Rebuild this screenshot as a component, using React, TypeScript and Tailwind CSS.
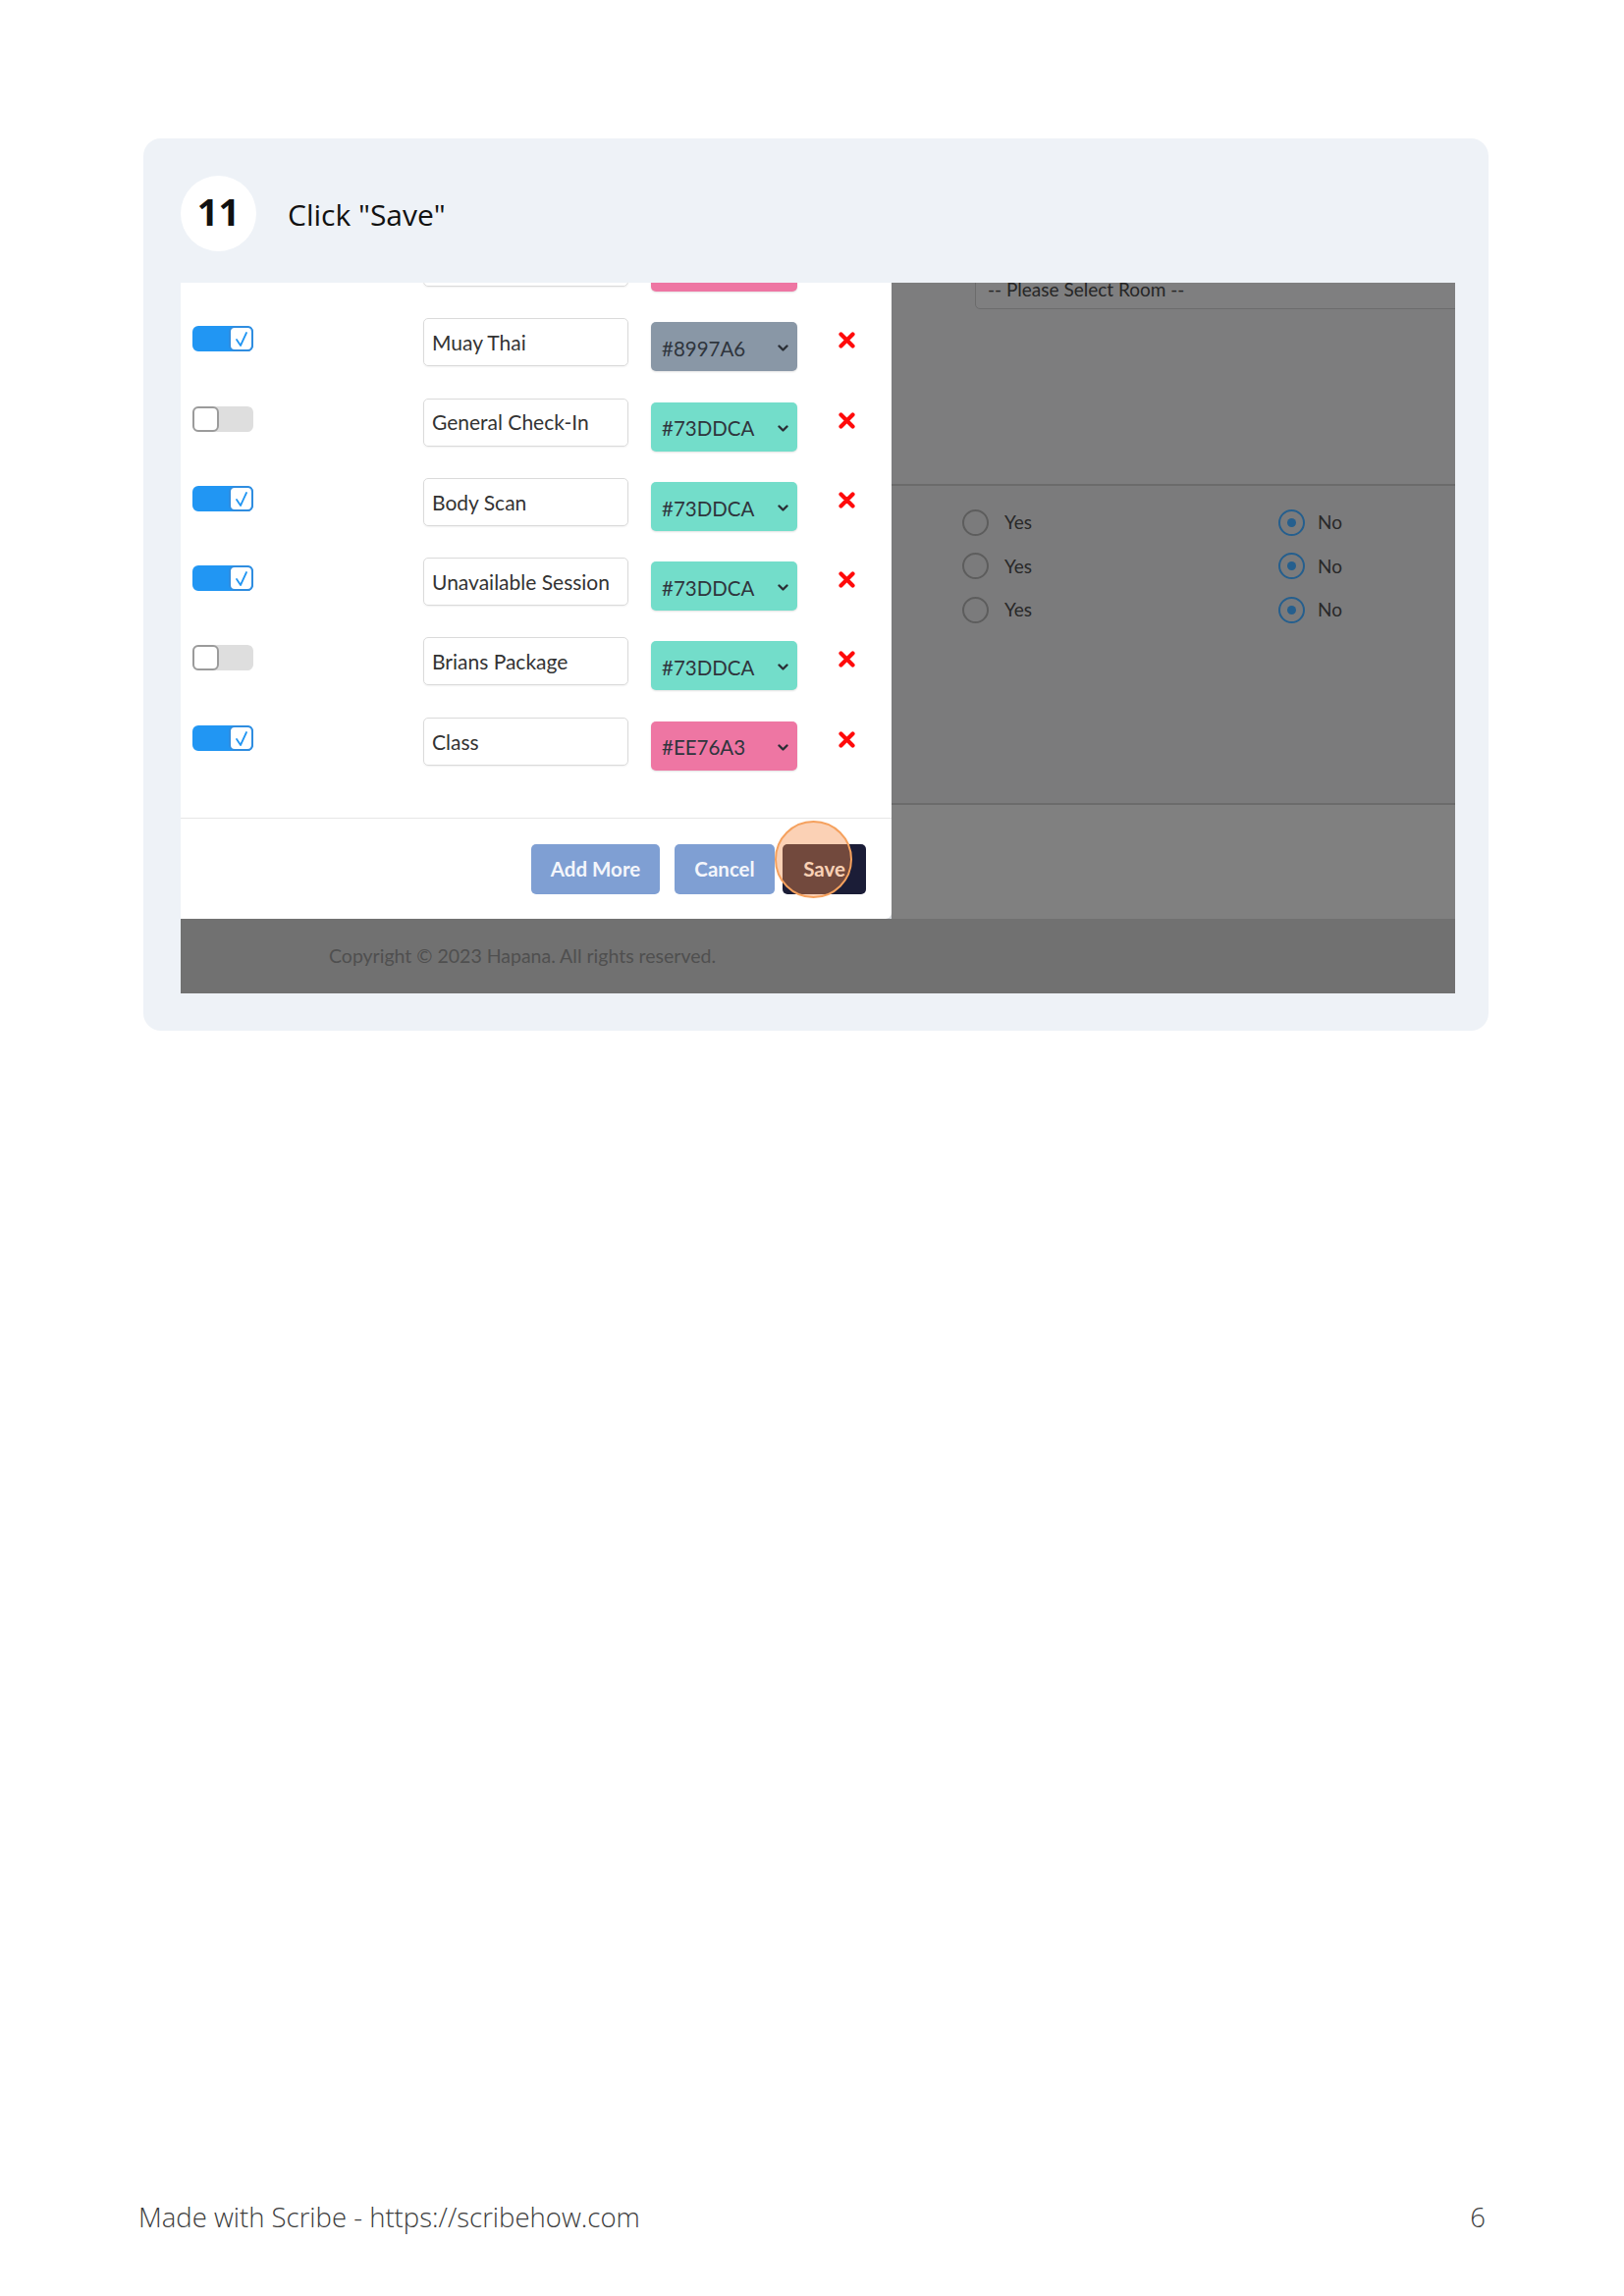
import React from "react"

type Row = { label: string; on: boolean; color: string; hidden?: boolean }

// first row is scrolled mostly out of view at the top of the modal
const rows: Row[] = [
  { label: "", on: true, color: "#EE76A3", hidden: true },
  { label: "Muay Thai", on: true, color: "#8997A6" },
  { label: "General Check-In", on: false, color: "#73DDCA" },
  { label: "Body Scan", on: true, color: "#73DDCA" },
  { label: "Unavailable Session", on: true, color: "#73DDCA" },
  { label: "Brians Package", on: false, color: "#73DDCA" },
  { label: "Class", on: true, color: "#EE76A3" },
]

function Toggle({ on }: { on: boolean }) {
  if (on) {
    return (
      <div className="flex h-[26px] w-[62px] justify-end rounded-[6px] bg-[#2196f3]">
        <div className="flex h-[26px] w-[25px] items-center justify-center rounded-[6px] border-2 border-[#2f8de0] bg-white">
          <svg width="16" height="18" viewBox="0 0 16 18" fill="none">
            <polyline points="3,10 7,16 13,3" stroke="#2196f3" strokeWidth="1.8" strokeLinecap="round" strokeLinejoin="round" />
          </svg>
        </div>
      </div>
    )
  }
  return (
    <div className="flex h-[26px] w-[62px] justify-start rounded-[6px] bg-[#dedede]">
      <div className="h-[26px] w-[27px] rounded-[6px] border-2 border-[#9b9b9b] bg-white" />
    </div>
  )
}

function Chevron() {
  return (
    <svg width="11" height="8" viewBox="0 0 11 8" fill="none">
      <polyline points="1.5,1.5 5.5,5.5 9.5,1.5" stroke="#2b2f36" strokeWidth="2.4" strokeLinecap="round" strokeLinejoin="round" />
    </svg>
  )
}

function RemoveIcon() {
  return (
    <svg width="17" height="17" viewBox="0 0 17 17">
      <path d="M2.5 2.5 L14.5 14.5 M14.5 2.5 L2.5 14.5" stroke="#ff0a0a" strokeWidth="4.2" strokeLinecap="round" />
    </svg>
  )
}

function Radio({ checked }: { checked: boolean }) {
  return checked ? (
    <div className="flex h-[27px] w-[27px] items-center justify-center rounded-full border-[2.5px] border-[#255f8e]">
      <div className="h-[9px] w-[9px] rounded-full bg-[#255f8e]" />
    </div>
  ) : (
    <div className="h-[27px] w-[27px] rounded-full border-[2.5px] border-[#5d5d5d]" />
  )
}

function Modal() {
  return (
    <div className="flex w-[724px] shrink-0 flex-col overflow-hidden rounded-br-[6px] bg-white font-['Lato',sans-serif] shadow-[0_2px_6px_rgba(0,0,0,0.25)]">
      <div className="-mt-[45px] flex flex-col">
        {rows.map((r, i) => (
          <div key={i} className="flex h-[81.3px] items-start pl-[12px]">
            <div className="mt-[8px]">
              <Toggle on={r.on} />
            </div>
            <div className="ml-[173px] flex h-[49px] w-[209px] items-center rounded-[5px] border border-[#dadada] pl-[8px] text-[21px] text-[#333333] shadow-[0_1px_2px_rgba(0,0,0,0.06)]">
              {r.label}
            </div>
            <div
              className="ml-[23px] mt-[4px] flex h-[50px] w-[149px] items-center justify-between rounded-[5px] pl-[11px] pr-[9px] pt-[4px] text-[20.5px] text-[#2f353d] shadow-[0_1px_2px_rgba(0,0,0,0.12)]"
              style={{ backgroundColor: r.color }}
            >
              <span>{r.hidden ? "" : r.color.toUpperCase()}</span>
              <Chevron />
            </div>
            <div className="ml-[42px] mt-[14px]">
              <RemoveIcon />
            </div>
          </div>
        ))}
      </div>
      <div className="mt-[21px] border-t border-[#e6e6e6]" />
      <div className="flex flex-1 items-start justify-end gap-[8px] pr-[26px] pt-[26px]">
        <div className="mr-[7px] flex h-[51px] w-[131px] items-center justify-center rounded-[5px] bg-[#7f9fd3] text-[20.5px] font-bold text-[#f4f6fb]">
          Add More
        </div>
        <div className="flex h-[51px] w-[102px] items-center justify-center rounded-[5px] bg-[#7f9fd3] text-[20.5px] font-bold text-[#f4f6fb]">
          Cancel
        </div>
        <div className="relative flex h-[51px] w-[85px] items-center justify-center rounded-[5px] bg-[#1b1d37] text-[20.5px] font-bold text-white">
          Save
          <div className="absolute -left-[8px] -top-[24px] h-[79px] w-[79px] rounded-full border-[2.5px] border-[#f5a15e] bg-[rgba(245,140,70,0.4)]" />
        </div>
      </div>
    </div>
  )
}

function BackgroundPanel() {
  return (
    <div className="flex flex-1 flex-col overflow-hidden font-['Lato',sans-serif]">
      <div className="h-[205px] bg-[#7d7d7e]">
        <div className="-mt-[13px] ml-[85px] flex h-[40px] w-[520px] items-center rounded-[5px] border border-[#6c6c6c] bg-[#7f7f80] pl-[12px] text-[19px] text-[#262626]">
          -- Please Select Room --
        </div>
      </div>
      <div className="h-[2px] bg-[#6b6b6b]" />
      <div className="flex h-[323px] flex-col bg-[#7b7b7c] pl-[72px] pt-[15px]">
        {[0, 1, 2].map((i) => (
          <div key={i} className="flex h-[44.5px] items-center text-[19px] text-[#282828]">
            <div className="flex w-[322px] items-center gap-[16px]">
              <Radio checked={false} />
              <span>Yes</span>
            </div>
            <div className="flex items-center gap-[13px]">
              <Radio checked />
              <span>No</span>
            </div>
          </div>
        ))}
      </div>
      <div className="h-[2px] bg-[#6b6b6b]" />
      <div className="flex-1 bg-[#808080]" />
    </div>
  )
}

export default function App() {
  return (
    <div className="flex h-[2339px] w-[1654px] flex-col bg-white">
      <div className="ml-[146px] mt-[141px] flex h-[909px] w-[1370px] flex-col rounded-[18px] bg-[#eef2f7] pl-[38px] pt-[38px]">
        <div className="flex items-center gap-[32px]">
          <div className="flex h-[77px] w-[77px] items-center justify-center rounded-full bg-white pb-[4px] font-['Open_Sans',sans-serif] text-[38px] font-bold text-[#111111]">
            11
          </div>
          <div className="mt-[2px] font-['Open_Sans',sans-serif] text-[30px] text-[#111111]">
            Click "Save"
          </div>
        </div>
        <div className="mt-[32px] flex h-[724px] w-[1298px] flex-col overflow-hidden">
          <div className="flex h-[648px]">
            <Modal />
            <BackgroundPanel />
          </div>
          <div className="flex flex-1 items-center bg-[#717171] pl-[151px] font-['Lato',sans-serif] text-[19.5px] text-[#4f4f4f]">
            Copyright © 2023 Hapana. All rights reserved.
          </div>
        </div>
      </div>
      <div className="mt-[1190px] flex justify-between px-[141px] font-['Open_Sans',sans-serif] text-[27.5px] font-light leading-[38px] text-[#3d3d3d]">
        <span>Made with Scribe - https://scribehow.com</span>
        <span>6</span>
      </div>
    </div>
  )
}
